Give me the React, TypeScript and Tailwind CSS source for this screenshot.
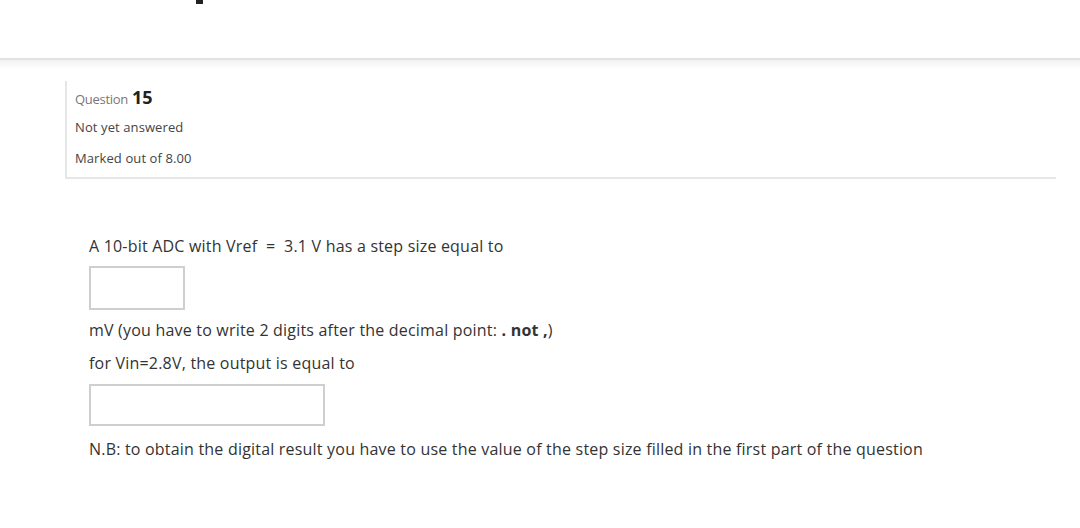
import React from 'react';

const font = { fontFamily: '"Open Sans", "Noto Sans", sans-serif' };

export default function App() {
  return (
    <div className="w-[1080px] h-[528px] bg-white overflow-hidden text-[#333]" style={font}>
      {/* top strip */}
      <div className="h-[58px] relative">
        <div className="absolute left-[196px] top-0 w-[7px] h-[4px] bg-[#222]" />
      </div>
      <div className="h-[2px] bg-[#e2e2e2]" />
      <div className="h-[9px] bg-gradient-to-b from-[#f2f2f2] to-white" />

      {/* question info */}
      <div className="ml-[65px] mt-[12px] w-[991px] border-l-2 border-b-2 border-[#e6e6e6] pl-[8px] pt-[5px] pb-[8px]">
        <div className="h-[22px] leading-[22px] flex items-baseline">
          <span className="text-[13px] text-[#777] tracking-[-0.3px]">Question</span>
          <span className="ml-[4px] text-[18px] font-bold text-[#222]">15</span>
        </div>
        <div className="mt-[8px] h-[22px] leading-[22px] text-[13px] tracking-[0.1px] text-[#444]">Not yet answered</div>
        <div className="mt-[9px] h-[22px] leading-[22px] text-[13px] tracking-[0.1px] text-[#444]">Marked out of 8.00</div>
      </div>

      {/* question text */}
      <div className="ml-[89px] mt-[56px] text-[16px] tracking-[0.2px]">
        <p className="h-[22px] leading-[22px]">A 10-bit ADC with Vref &nbsp;= &nbsp;3.1 V has a step size equal to</p>
        <input className="block mt-[9px] w-[96px] h-[44px] border-2 border-[#cfcfcf] bg-white outline-none" />
        <p className="mt-[9px] h-[22px] leading-[22px]">
          mV (you have to write 2 digits after the decimal point: <b>. not ,</b>)
        </p>
        <p className="mt-[11px] h-[22px] leading-[22px]">for Vin=2.8V, the output is equal to</p>
        <input className="block mt-[10px] w-[236px] h-[42px] border-2 border-[#cfcfcf] bg-white outline-none" />
        <p className="mt-[12px] h-[22px] leading-[22px]">
          N.B: to obtain the digital result you have to use the value of the step size filled in the first part of the question
        </p>
      </div>
    </div>
  );
}
